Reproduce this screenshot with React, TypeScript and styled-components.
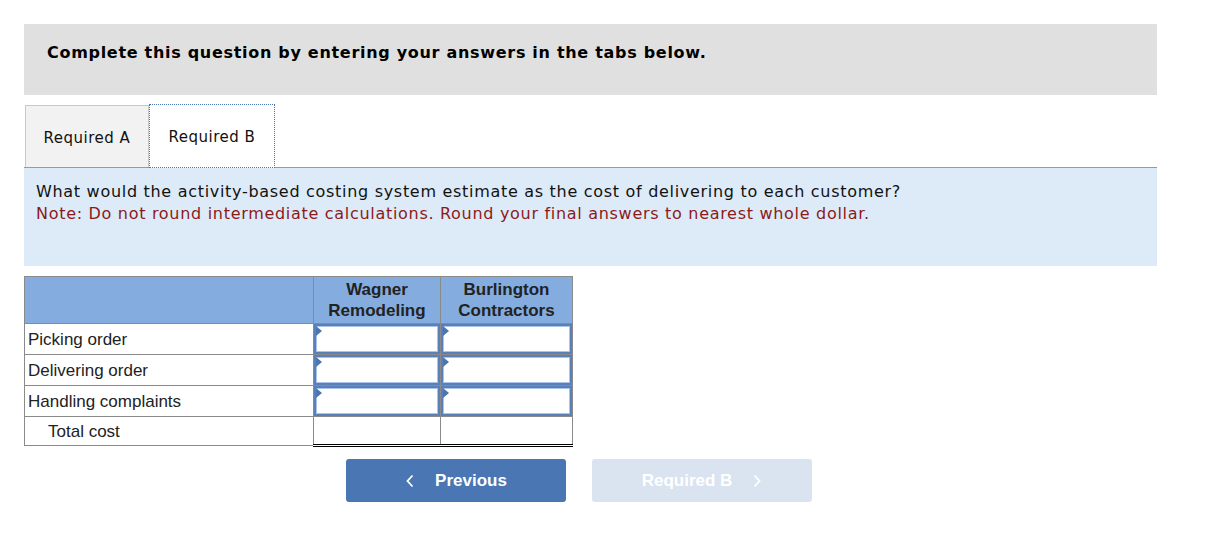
import React from "react";
import styled, { createGlobalStyle } from "styled-components";

const GlobalStyle = createGlobalStyle`
  body {
    margin: 0;
    background: #ffffff;
    font-family: "DejaVu Sans", Verdana, sans-serif;
  }
`;

const rows = ["Picking order", "Delivering order", "Handling complaints"];

const App = () => {
  return (
    <>
      <GlobalStyle />
      <Page>
        <Banner>Complete this question by entering your answers in the tabs below.</Banner>

        <Tabs>
          <Tab>Required A</Tab>
          <Tab active>Required B</Tab>
        </Tabs>

        <Info>
          <Question>
            What would the activity-based costing system estimate as the cost of delivering to each customer?
          </Question>
          <Note>Note: Do not round intermediate calculations. Round your final answers to nearest whole dollar.</Note>
        </Info>

        <Table>
          <colgroup>
            <col style={{ width: 289 }} />
            <col style={{ width: 127 }} />
            <col style={{ width: 132 }} />
          </colgroup>
          <thead>
            <tr>
              <HeadCell />
              <HeadCell>
                Wagner
                <br />
                Remodeling
              </HeadCell>
              <HeadCell>
                Burlington
                <br />
                Contractors
              </HeadCell>
            </tr>
          </thead>
          <tbody>
            {rows.map((r) => (
              <tr key={r}>
                <LabelCell>{r}</LabelCell>
                <InputCell>
                  <Entry />
                </InputCell>
                <InputCell>
                  <Entry />
                </InputCell>
              </tr>
            ))}
            <tr>
              <LabelCell indent total>
                Total cost
              </LabelCell>
              <TotalCell />
              <TotalCell />
            </tr>
          </tbody>
        </Table>

        <Nav>
          <NavButton>
            <Chevron>
              <svg width="10" height="14" viewBox="0 0 10 14">
                <path d="M7.5 1.5 L2.5 7 L7.5 12.5" fill="none" stroke="#fff" strokeWidth="1.8" />
              </svg>
            </Chevron>
            Previous
          </NavButton>
          <NavButton disabled>
            Required B
            <Chevron right>
              <svg width="10" height="14" viewBox="0 0 10 14">
                <path d="M2.5 1.5 L7.5 7 L2.5 12.5" fill="none" stroke="#fff" strokeWidth="1.8" />
              </svg>
            </Chevron>
          </NavButton>
        </Nav>
      </Page>
    </>
  );
};

export default App;

const Page = styled.div`
  width: 1133px;
  padding: 24px 0 0 24px;
`;

const Banner = styled.div`
  height: 71px;
  background: #e0e0e0;
  padding: 19px 0 0 23px;
  box-sizing: border-box;
  font-weight: 700;
  font-size: 16px;
  letter-spacing: 0.7px;
  color: #000;
`;

const Tabs = styled.div`
  display: flex;
  margin-top: 10px;
  height: 62px;
  border-bottom: 1px solid #9a9a9a;
  padding-left: 1px;
`;

const Tab = styled.div<{ active?: boolean }>`
  width: ${(p) => (p.active ? "126px" : "124px")};
  box-sizing: border-box;
  display: flex;
  align-items: center;
  justify-content: center;
  font-size: 15px;
  letter-spacing: 0.5px;
  color: #111;
  background: ${(p) => (p.active ? "#ffffff" : "#f2f2f2")};
  border: ${(p) => (p.active ? "1px dotted #4a76b4" : "1px solid #c8c8c8")};
  border-bottom: none;
  padding-top: 2px;
  ${(p) => p.active && "height: 64px; margin-top: -1px; border-bottom: 1px dotted #4a76b4; position: relative; z-index: 1;"}
`;

const Info = styled.div`
  height: 98px;
  background: #ddebf8;
  padding: 13px 0 0 12px;
  box-sizing: border-box;
  font-size: 16px;
  line-height: 22px;
  letter-spacing: 0.7px;
`;

const Question = styled.div`
  color: #111;
`;

const Note = styled.div`
  color: #8b1a1a;
`;

const Table = styled.table`
  margin-top: 10px;
  width: 549px;
  border-collapse: collapse;
  table-layout: fixed;
  font-family: "Liberation Sans", Arial, sans-serif;
  font-size: 17px;
  color: #222;
`;

const HeadCell = styled.th`
  height: 46px;
  background: #84acdf;
  border: 1px solid #8a8a8a;
  font-weight: 700;
  line-height: 21px;
  padding: 0;
  text-align: center;
`;

const LabelCell = styled.td<{ indent?: boolean; total?: boolean }>`
  height: ${(p) => (p.total ? "29px" : "30px")};
  border: 1px solid #8a8a8a;
  padding: 2px 0 0 ${(p) => (p.indent ? "23px" : "3px")};
  box-sizing: border-box;
  text-align: left;
`;

const InputCell = styled.td`
  height: 30px;
  padding: 0;
  border: 1px solid #8a8a8a;
  position: relative;
`;

const Entry = styled.div`
  height: 30px;
  box-sizing: border-box;
  border: 2px solid #5a80ba;
  box-shadow: inset 0 0 0 1px #a9c4e8;
  background: #ffffff;
  position: relative;

  &::before {
    content: "";
    position: absolute;
    left: 0;
    top: 0;
    border-left: 6px solid #4a76b4;
    border-top: 5px solid transparent;
    border-bottom: 5px solid transparent;
  }
`;

const TotalCell = styled.td`
  height: 27px;
  padding: 0;
  border: 1px solid #8a8a8a;
  border-top: 1px solid #000;
  border-bottom: 3px double #000;
`;

const Nav = styled.div`
  display: flex;
  gap: 26px;
  margin: 12px 0 0 322px;
`;

const NavButton = styled.button`
  width: 220px;
  height: 43px;
  border: none;
  border-radius: 3px;
  background: #4a76b4;
  color: #ffffff;
  font-family: "Liberation Sans", Arial, sans-serif;
  font-weight: 700;
  font-size: 17px;
  display: flex;
  align-items: center;
  justify-content: center;
  padding: 0;

  &:disabled {
    background: #dae4f0;
  }
`;

const Chevron = styled.span<{ right?: boolean }>`
  display: inline-flex;
  margin: ${(p) => (p.right ? "0 0 0 20px" : "0 20px 0 0")};
`;
